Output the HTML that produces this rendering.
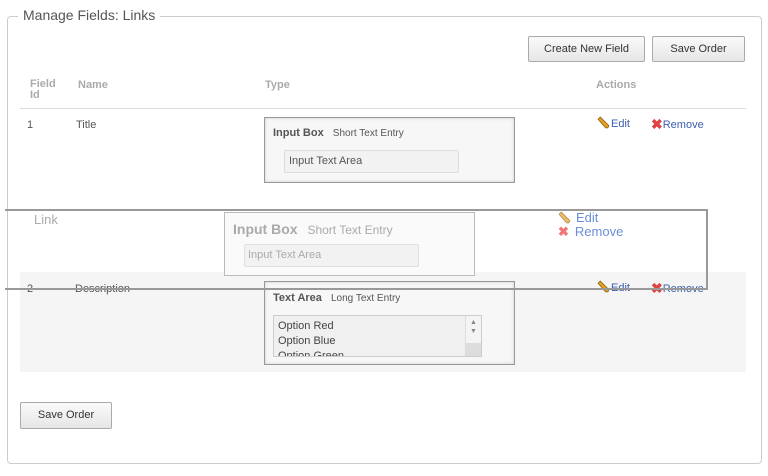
<!DOCTYPE html>
<html><head><meta charset="utf-8"><style>
*{margin:0;padding:0;box-sizing:border-box}
body{width:768px;height:476px;background:#fff;font-family:"Liberation Sans",sans-serif;position:relative;overflow:hidden;color:#555}
.a{position:absolute;white-space:nowrap}
.fs{left:7px;top:16px;width:755px;height:448px;border:1px solid #ccc;border-radius:4px}
.lg{left:18px;top:7px;font-size:14px;background:#fff;padding:0 5px;color:#555}
.btn{border:1px solid #aaa;border-radius:2px;background:linear-gradient(#fafafa,#e6e6e6);font-size:11px;color:#333;text-align:center}
.th{font-size:11px;font-weight:bold;color:#aaa}
.td{font-size:11px;color:#555}
.box{border:1px solid #999;background:#f7f7f7;box-shadow:inset 0 0 3px #ccc}
.inp{border:1px solid #ddd;border-radius:2px;background:#f2f2f2;font-size:11px;color:#555;padding:4px 4px}
.lk{font-size:11px;color:#3a5fb0}
.pen{display:inline-block;width:13px;height:13px;vertical-align:-2px;margin-right:1px}
.x{color:#d44;font-weight:bold;font-size:14px;vertical-align:-1px}
</style></head><body>
<div class="a fs"></div>
<div class="a lg">Manage Fields: Links</div>
<div class="a btn" style="left:528px;top:36px;width:117px;height:26px;line-height:24px">Create New Field</div>
<div class="a btn" style="left:652px;top:36px;width:93px;height:26px;line-height:24px">Save Order</div>
<div class="a th" style="left:30px;top:79px;line-height:11px">Field<br>Id</div>
<div class="a th" style="left:78px;top:79px">Name</div>
<div class="a th" style="left:265px;top:79px">Type</div>
<div class="a th" style="left:596px;top:79px">Actions</div>
<div class="a" style="left:20px;top:108px;width:726px;height:1px;background:#ddd"></div>

<div class="a td" style="left:27px;top:119px">1</div>
<div class="a td" style="left:76px;top:119px">Title</div>
<div class="a box" style="left:264px;top:117px;width:251px;height:66px"></div>
<div class="a" style="left:273px;top:127px;font-size:11px;font-weight:bold;color:#555">Input Box <span style="font-weight:normal;font-size:10px;margin-left:6px">Short Text Entry</span></div>
<div class="a inp" style="left:284px;top:150px;width:175px;height:23px">Input Text Area</div>
<div class="a lk" style="left:597px;top:116px"><svg class="pen" viewBox="0 0 12 12"><path d="M1 3l2-2 8 8-1 2-2 0z" fill="#e8a020" stroke="#8a5a10" stroke-width=".7"/></svg>Edit</div>
<div class="a lk" style="left:651px;top:116px"><span class="x">✖</span>Remove</div>

<div class="a" style="left:20px;top:272px;width:726px;height:100px;background:#f5f5f5"></div>
<div class="a td" style="left:27px;top:283px">2</div>
<div class="a td" style="left:75px;top:283px">Description</div>
<div class="a box" style="left:264px;top:281px;width:251px;height:84px"></div>
<div class="a" style="left:273px;top:292px;font-size:11px;font-weight:bold;color:#555">Text Area <span style="font-weight:normal;font-size:10px;margin-left:6px">Long Text Entry</span></div>
<div class="a" style="left:273px;top:315px;width:209px;height:42px;border:1px solid #ccc;background:#f0f0f0;overflow:hidden;font-size:11px;line-height:15px;padding:3px 4px;color:#444">Option Red<br>Option Blue<br>Option Green</div>
<div class="a" style="left:465px;top:316px;width:16px;height:40px;background:#f4f4f4;border-left:1px solid #ddd"><div style="position:absolute;top:27px;left:0;width:15px;height:13px;background:#ddd"></div><div style="font-size:7px;color:#888;text-align:center;line-height:9px;margin-top:2px">▲<br>▼</div></div>
<div class="a lk" style="left:597px;top:280px"><svg class="pen" viewBox="0 0 12 12"><path d="M1 3l2-2 8 8-1 2-2 0z" fill="#e8a020" stroke="#8a5a10" stroke-width=".7"/></svg>Edit</div>
<div class="a lk" style="left:651px;top:280px"><span class="x">✖</span>Remove</div>

<!-- drag ghost -->
<div class="a" style="left:5px;top:209px;width:703px;height:81px;border:2px solid #999;border-left:none"></div>
<div class="a" style="left:34px;top:212px;font-size:13px;color:#aaa">Link</div>
<div class="a" style="left:224px;top:212px;width:251px;height:64px;border:1px solid #bbb;background:rgba(250,250,250,.95)"></div>
<div class="a" style="left:233px;top:221px;font-size:14px;font-weight:bold;color:#aaa">Input Box <span style="font-weight:normal;font-size:12px;margin-left:6px">Short Text Entry</span></div>
<div class="a" style="left:244px;top:244px;width:175px;height:23px;border:1px solid #e0e0e0;border-radius:2px;background:#f2f2f2;font-size:11px;color:#aaa;padding:4px 3px">Input Text Area</div>
<div class="a" style="left:558px;top:211px;font-size:13px;color:#6a8fd8;line-height:14px"><svg class="pen" viewBox="0 0 12 12" style="opacity:.7;margin-right:5px"><path d="M1 3l2-2 8 8-1 2-2 0z" fill="#e8a020" stroke="#8a5a10" stroke-width=".7"/></svg>Edit<br><span style="color:#e77;font-size:13px;font-weight:bold;margin-right:6px">✖</span>Remove</div>

<div class="a btn" style="left:20px;top:402px;width:92px;height:27px;line-height:25px">Save Order</div>
</body></html>
